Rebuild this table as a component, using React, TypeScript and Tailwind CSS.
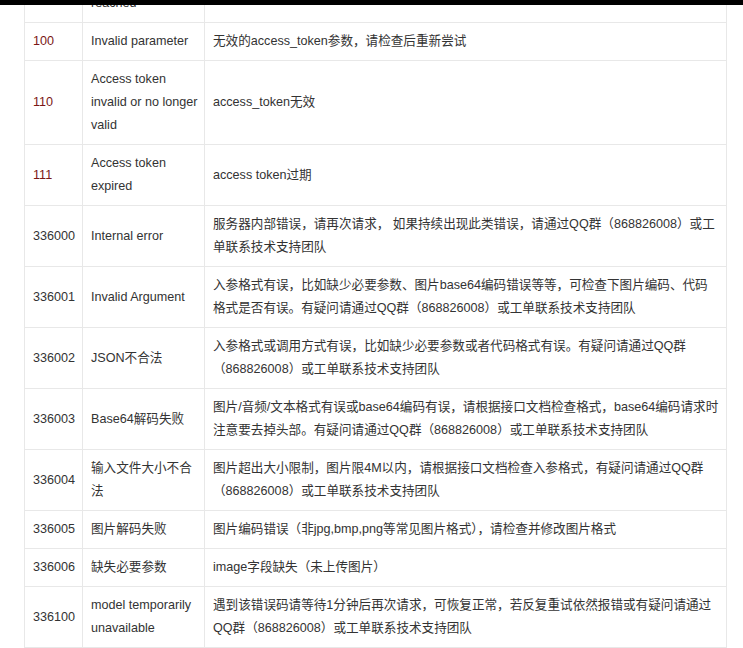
import React from "react";

type Row = {
    code: string;
    name: React.ReactNode;
    desc: React.ReactNode;
    red?: boolean;
};

const rows: Row[] = [
    { code: "19", name: "Open api total request limit reached", desc: "请求总量超限额" },
    { code: "100", name: "Invalid parameter", desc: "无效的access_token参数，请检查后重新尝试", red: true },
    { code: "110", name: "Access token invalid or no longer valid", desc: "access_token无效", red: true },
    { code: "111", name: "Access token expired", desc: "access token过期", red: true },
    {
        code: "336000",
        name: "Internal error",
        desc: "服务器内部错误，请再次请求， 如果持续出现此类错误，请通过QQ群（868826008）或工单联系技术支持团队",
    },
    {
        code: "336001",
        name: "Invalid Argument",
        desc: "入参格式有误，比如缺少必要参数、图片base64编码错误等等，可检查下图片编码、代码格式是否有误。有疑问请通过QQ群（868826008）或工单联系技术支持团队",
    },
    {
        code: "336002",
        name: "JSON不合法",
        desc: "入参格式或调用方式有误，比如缺少必要参数或者代码格式有误。有疑问请通过QQ群（868826008）或工单联系技术支持团队",
    },
    {
        code: "336003",
        name: "Base64解码失败",
        desc: "图片/音频/文本格式有误或base64编码有误，请根据接口文档检查格式，base64编码请求时注意要去掉头部。有疑问请通过QQ群（868826008）或工单联系技术支持团队",
    },
    {
        code: "336004",
        name: "输入文件大小不合法",
        desc: "图片超出大小限制，图片限4M以内，请根据接口文档检查入参格式，有疑问请通过QQ群（868826008）或工单联系技术支持团队",
    },
    { code: "336005", name: "图片解码失败", desc: "图片编码错误（非jpg,bmp,png等常见图片格式），请检查并修改图片格式" },
    { code: "336006", name: "缺失必要参数", desc: "image字段缺失（未上传图片）" },
    {
        code: "336100",
        name: "model temporarily unavailable",
        desc: "遇到该错误码请等待1分钟后再次请求，可恢复正常，若反复重试依然报错或有疑问请通过QQ群（868826008）或工单联系技术支持团队",
    },
];

export default function App() {
    return (
        <div
            className="relative w-[743px] h-[648px] overflow-hidden bg-white text-[12.6px] leading-[23px] text-[#333]"
            style={{ fontFamily: '"Liberation Sans", "Noto Sans CJK SC", sans-serif' }}
        >
            {/* top bar of the window */}
            <div className="absolute top-0 left-0 right-0 h-[5px] bg-black z-10" />

            <table className="ml-[24px] mt-[-62px] w-[702px] table-fixed border-collapse">
                <colgroup>
                    <col className="w-[58px]" />
                    <col className="w-[122px]" />
                    <col className="w-[522px]" />
                </colgroup>
                <tbody>
                    {rows.map((r) => (
                        <tr key={r.code}>
                            <td className={`border border-[#e8e8e8] pl-2 pr-1 py-[7px] align-middle ${r.red ? "text-[#7b1616]" : ""}`}>
                                {r.code}
                            </td>
                            <td className="border border-[#e8e8e8] pl-2 pr-1 py-[7px] align-middle">{r.name}</td>
                            <td className="border border-[#e8e8e8] pl-2 pr-[7px] py-[7px] align-middle">{r.desc}</td>
                        </tr>
                    ))}
                </tbody>
            </table>
        </div>
    );
}
